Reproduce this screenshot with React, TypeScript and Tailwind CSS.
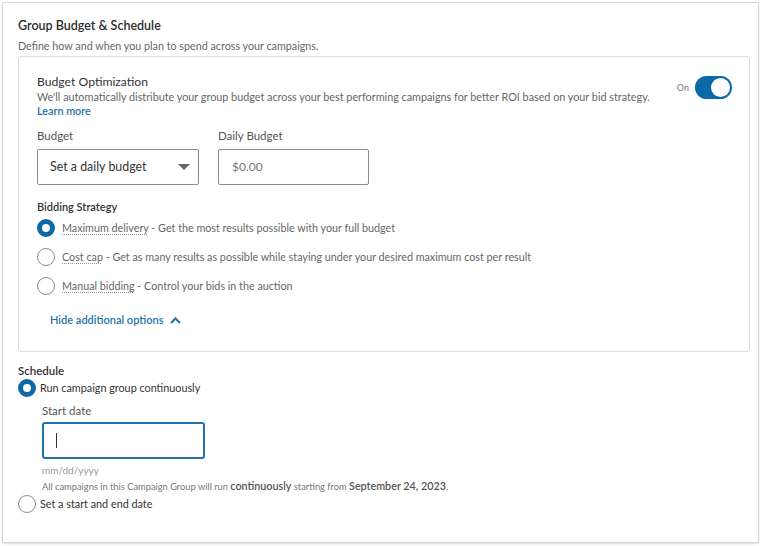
import React from "react";

const font = { fontFamily: 'Lato, "Open Sans", "Liberation Sans", sans-serif' };

function Radio({ checked }: { checked?: boolean }) {
  return checked ? (
    <span className="inline-block w-[18px] h-[18px] rounded-full border-[5px] border-[#0b69a8] bg-white shrink-0" />
  ) : (
    <span className="inline-block w-[18px] h-[18px] rounded-full border border-[#8c8c8c] bg-white shrink-0" />
  );
}

export default function App() {
  return (
    <div className="w-[768px] h-[546px] bg-white p-[2px] pr-[9px] pb-[3px]" style={font}>
      <div className="h-full border border-[#d6d6d6] rounded-[2px] shadow-[0_1px_2px_rgba(0,0,0,0.15)] bg-white pl-[15px] pr-[8px] pt-[14px] text-[#333]">
        <h2 className="text-[12.5px] font-semibold leading-[18px] text-[#2b2b2b]">Group Budget &amp; Schedule</h2>
        <p className="text-[10.75px] leading-[14px] text-[#666] mt-[4px]">Define how and when you plan to spend across your campaigns.</p>

        <div className="mt-[3px] border border-[#dedede] rounded-[3px] h-[296px] pl-[18px] pr-[17px] pt-[17px]">
          <div className="flex justify-between">
            <div>
              <div className="text-[12.2px] leading-[16px] text-[#333]">Budget Optimization</div>
              <div className="text-[10.8px] leading-[14px] text-[#666]">We'll automatically distribute your group budget across your best performing campaigns for better ROI based on your bid strategy.</div>
              <div className="text-[10.8px] leading-[14px] font-semibold text-[#1f73ab]">Learn more</div>
            </div>
            <div className="flex items-center gap-[6px] pt-[2px] self-start">
              <span className="text-[9px] text-[#777]">On</span>
              <span className="w-[37px] h-[23px] rounded-full bg-[#0b69a8] flex items-center justify-end pr-[2px]">
                <span className="w-[19px] h-[19px] rounded-full bg-white" />
              </span>
            </div>
          </div>

          <div className="flex gap-[19px] mt-[11px]">
            <div>
              <div className="text-[11.5px] leading-[14px] text-[#555]">Budget</div>
              <div className="mt-[6px] w-[162px] h-[36px] border border-[#8c8c8c] rounded-[2px] flex items-center justify-between pl-[12px] pr-[8px]">
                <span className="text-[12.4px] text-[#333]">Set a daily budget</span>
                <svg width="12" height="7" viewBox="0 0 12 7"><path d="M0 0h12L6 6z" fill="#666" /></svg>
              </div>
            </div>
            <div>
              <div className="text-[11.5px] leading-[14px] text-[#555]">Daily Budget</div>
              <div className="mt-[6px] w-[151px] h-[36px] border border-[#8c8c8c] rounded-[2px] flex items-center pl-[13px]">
                <span className="text-[12px] text-[#777]">$0.00</span>
              </div>
            </div>
          </div>

          <div className="mt-[15px] text-[11px] leading-[14px] font-semibold text-[#333]">Bidding Strategy</div>
          <div className="mt-[5px] flex flex-col gap-[11px]">
            {[
              { c: true, t: "Maximum delivery", d: "Get the most results possible with your full budget" },
              { c: false, t: "Cost cap", d: "Get as many results as possible while staying under your desired maximum cost per result" },
              { c: false, t: "Manual bidding", d: "Control your bids in the auction" },
            ].map((r, i) => (
              <div key={i} className="flex items-center gap-[7px] h-[18px]">
                <Radio checked={r.c} />
                <span className="text-[10.75px] text-[#666]">
                  <span className="underline decoration-dotted decoration-[#999] underline-offset-2">{r.t}</span> - {r.d}
                </span>
              </div>
            ))}
          </div>

          <div className="mt-[17px] ml-[13px] flex items-center gap-[7px] text-[11px] font-semibold text-[#1f73ab]">
            Hide additional options
            <svg width="11" height="7" viewBox="0 0 11 7"><path d="M1 6l4.5-4.5L10 6" fill="none" stroke="#1f73ab" strokeWidth="2" /></svg>
          </div>
        </div>

        <div className="mt-[12px] text-[11.5px] leading-[14px] font-semibold text-[#333]">Schedule</div>
        <div className="flex items-center gap-[4px] mt-[1px]">
          <Radio checked />
          <span className="text-[10.8px] text-[#333]">Run campaign group continuously</span>
        </div>
        <div className="ml-[24px]">
          <div className="mt-[7px] text-[11.5px] leading-[14px] text-[#555]">Start date</div>
          <div className="mt-[4px] w-[163px] h-[37px] border-2 border-[#1f73ab] rounded-[3px] flex items-center pl-[12px]">
            <span className="w-px h-[15px] bg-[#333]" />
          </div>
          <div className="mt-[5px] text-[10px] leading-[12px] text-[#999]">mm/dd/yyyy</div>
          <div className="mt-[4px] text-[9.3px] leading-[12px] text-[#777]">
            All campaigns in this Campaign Group will run <span className="text-[10.75px] font-semibold text-[#555]">continuously</span> starting from <span className="text-[10.75px] font-semibold text-[#555]">September 24, 2023</span>.
          </div>
        </div>
        <div className="flex items-center gap-[4px] mt-[2px]">
          <Radio />
          <span className="text-[10.8px] text-[#333]">Set a start and end date</span>
        </div>
      </div>
    </div>
  );
}
